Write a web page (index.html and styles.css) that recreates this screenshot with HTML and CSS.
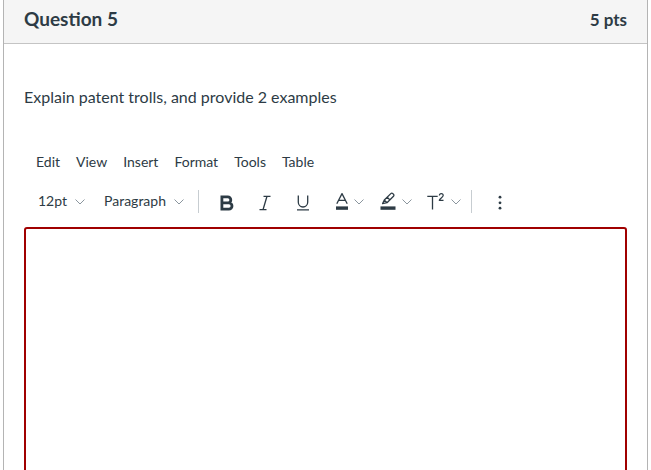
FILE: index.html
```html
<!DOCTYPE html>
<html lang="en">
<head>
<meta charset="utf-8">
<title>Question 5</title>
<link rel="stylesheet" href="styles.css">
</head>
<body>
<div class="card">
  <div class="header">
    <span class="title">Question 5</span>
    <span class="pts">5 pts</span>
  </div>
  <div class="body">
    <p class="prompt">Explain patent trolls, and provide 2 examples</p>
    <div class="menubar">
      <span class="menu">Edit</span>
      <span class="menu">View</span>
      <span class="menu">Insert</span>
      <span class="menu">Format</span>
      <span class="menu">Tools</span>
      <span class="menu">Table</span>
    </div>
    <div class="toolbar">
      <span class="tlabel t-size">12pt</span>
      <svg class="chev c1" width="10" height="6" viewBox="0 0 10 6"><path d="M0.5 0.5 L5 5 L9.5 0.5"/></svg>
      <span class="tlabel t-para">Paragraph</span>
      <svg class="chev c2" width="10" height="6" viewBox="0 0 10 6"><path d="M0.5 0.5 L5 5 L9.5 0.5"/></svg>
      <span class="sep s1"></span>
      <svg class="icon i-bold" width="24" height="24" viewBox="0 0 24 24"><path class="thick" d="M6.9 6.9 H12.8 A3 3 0 0 1 12.8 12.9 H6.9 M6.9 12.9 H13.9 A3.1 3.1 0 0 1 13.9 19.1 H6.9 Z M6.9 5.5 V20.5"/></svg>
      <svg class="icon i-ital" width="24" height="24" viewBox="0 0 24 24"><path class="thin" d="M10.5 6.3 H17.5 M6.5 19.7 H13.5 M14 6.3 L10 19.7"/></svg>
      <svg class="icon i-under" width="24" height="24" viewBox="0 0 24 24"><path class="thin" d="M7.3 5.5 V12.3 A4.7 4.7 0 0 0 16.7 12.3 V5.5 M6 19.8 H18"/></svg>
      <svg class="icon i-color" width="24" height="24" viewBox="0 0 24 24"><path class="thin" d="M6.8 13.8 L12 3.6 L17.2 13.8 M8.6 10.3 H15.4"/><rect x="6" y="16.4" width="12" height="3.4" class="fill"/></svg>
      <svg class="chev c3" width="10" height="6" viewBox="0 0 10 6"><path d="M0.5 0.5 L5 5 L9.5 0.5"/></svg>
      <svg class="icon i-high" width="24" height="24" viewBox="0 0 24 24"><path class="thin" d="M6.6 13.6 L8.3 10 L14.8 3.6 A1.4 1.4 0 0 1 16.8 3.6 L17.5 4.3 A1.4 1.4 0 0 1 17.5 6.3 L11 12.7 Z M8.3 10 L11 12.7 M11.2 7.2 L14 10"/><rect x="4.5" y="16.4" width="15" height="3.4" class="fill"/></svg>
      <svg class="chev c4" width="10" height="6" viewBox="0 0 10 6"><path d="M0.5 0.5 L5 5 L9.5 0.5"/></svg>
      <svg class="icon i-sup" width="24" height="24" viewBox="0 0 24 24"><path class="thin" d="M3.3 6.3 H13.7 M8.5 6.3 V19.6"/><path class="thin2" d="M15.4 5.6 A1.9 1.9 0 0 1 19.2 5.6 C19.2 7.2 15.4 8.6 15.3 10.3 H19.5"/></svg>
      <svg class="chev c5" width="10" height="6" viewBox="0 0 10 6"><path d="M0.5 0.5 L5 5 L9.5 0.5"/></svg>
      <span class="sep s2"></span>
      <svg class="icon i-more" width="24" height="24" viewBox="0 0 24 24"><circle cx="12" cy="7.2" r="1.4"/><circle cx="12" cy="12.8" r="1.4"/><circle cx="12" cy="18.2" r="1.4"/></svg>
    </div>
    <div class="editor"></div>
  </div>
</div>
</body>
</html>
```

FILE: styles.css
```css
* { box-sizing: border-box; }
html, body { margin: 0; padding: 0; background: #fff; }
body {
  font-family: Lato, "Liberation Sans", Arial, sans-serif;
  color: #2d3b45;
  overflow: hidden;
  height: 470px;
}
.card {
  margin-left: 3px;
  width: 645px;
  height: 470px;
  overflow: hidden;
  border-left: 1px solid #b4b4b4;
  border-right: 1px solid #b4b4b4;
}
.header {
  height: 44px;
  background: #f5f5f5;
  border-bottom: 1px solid #c4c4c4;
  display: flex;
  justify-content: space-between;
  align-items: baseline;
  padding: 7px 20px 0 20px;
}
.title {
  font-size: 19px;
  line-height: 23px;
  font-weight: 700;
}
.pts {
  font-size: 17px;
  line-height: 23px;
  font-weight: 700;
}
.body {
  padding: 41px 20px 0 20px;
}
.prompt {
  margin: 0;
  font-size: 16px;
  line-height: 24px;
}
.menubar {
  margin-top: 36px;
  height: 34px;
  display: flex;
  align-items: center;
  padding: 0 4px;
  font-size: 14px;
  line-height: 34px;
}
.menu {
  padding: 0 8px;
}
.toolbar {
  height: 45px;
  display: flex;
  align-items: center;
  padding-left: 14px;
  font-size: 14px;
}
.tlabel {
  line-height: 17px;
  padding-bottom: 3px;
}
.chev path {
  fill: none;
  stroke: #8b969e;
  stroke-width: 1;
}
.chev { flex: none; }
.c1 { margin-left: 8px; }
.t-para { margin-left: 19px; }
.c2 { margin-left: 8px; }
.sep {
  flex: none;
  width: 1px;
  height: 23px;
  background: #c7cdd1;
}
.s1 { margin-left: 14px; }
.icon { flex: none; display: block; }
.icon .thick { fill: none; stroke: #2d3b45; stroke-width: 2.8; stroke-linejoin: round; }
.icon .thin { fill: none; stroke: #2d3b45; stroke-width: 1.3; stroke-linejoin: round; }
.icon .thin2 { fill: none; stroke: #2d3b45; stroke-width: 1.2; stroke-linejoin: round; }
.icon .fill { fill: #2d3b45; }
.icon circle { fill: #2d3b45; }
.i-bold { margin-left: 16px; }
.i-ital { margin-left: 14px; }
.i-under { margin-left: 14px; }
.i-color { margin-left: 15px; }
.c3 { margin-left: 0; }
.i-high { margin-left: 12px; }
.c4 { margin-left: 2px; }
.i-sup { margin-left: 12px; }
.c5 { margin-left: 3px; }
.s2 { margin-left: 10px; }
.i-more { margin-left: 16px; }
.editor {
  margin-top: 3px;
  height: 300px;
  border: 2px solid #a00000;
  border-radius: 3px;
}
```
